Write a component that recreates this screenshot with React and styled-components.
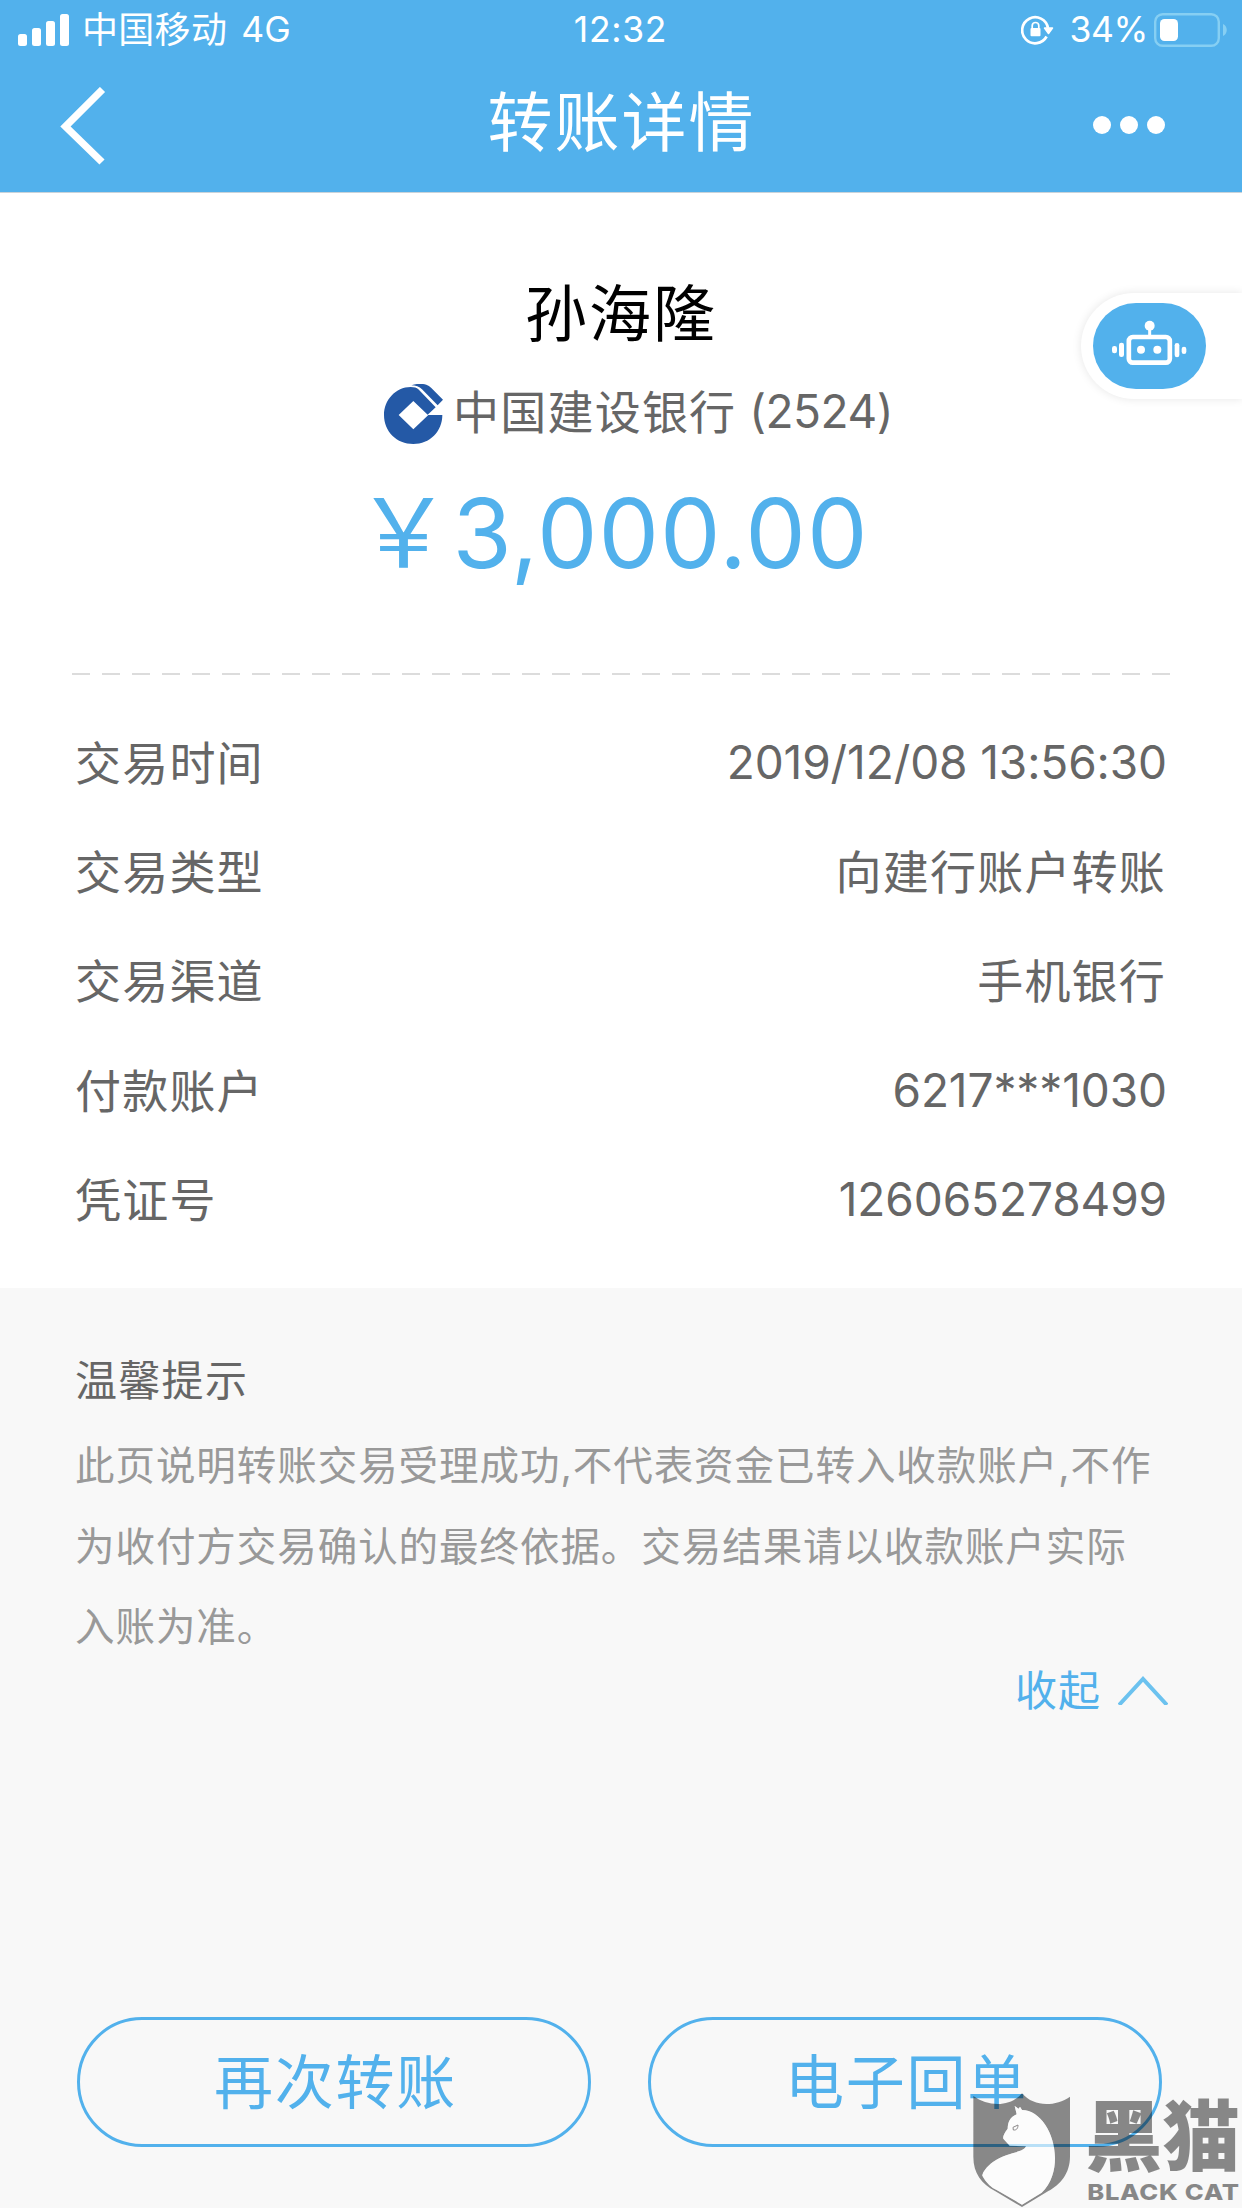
import React, { useState } from "react";
import styled, { createGlobalStyle } from "styled-components";

const BLUE = "#52b1ec";

const GlobalStyle = createGlobalStyle`
  * {
    box-sizing: border-box;
  }
  body {
    margin: 0;
    background-color: #f8f8f8;
    font-family: Inter, "Noto Sans CJK SC", sans-serif;
  }
`;
const Page = styled.div`
  position: relative;
  display: flex;
  flex-direction: column;
  width: 1242px;
  height: 2208px;
  overflow: hidden;
  background-color: #f8f8f8;
`;
const Header = styled.header`
  height: 193px;
  background-color: ${BLUE};
  border-bottom: solid 1px #c9d3da;
  color: white;
`;
const StatusBar = styled.div`
  display: grid;
  grid-template-columns: 1fr auto 1fr;
  align-items: center;
  height: 60px;
  padding: 0 15px 0 18px;
  font-size: 35.5px;
  line-height: 60px;
`;
const StatusGroup = styled.div`
  display: flex;
  flex-direction: row;
  align-items: center;
  justify-content: ${(props) => (props.$end ? "flex-end" : "flex-start")};

  > svg {
    flex: none;
  }
`;
const Carrier = styled.span`
  margin: 0 14px 0 13px;
  font-size: 36px;
  letter-spacing: 0.3px;
`;
const Clock = styled.span`
  margin-right: 4px;
  letter-spacing: 0.7px;
`;
const Percent = styled.span`
  margin: 0 6px 0 15px;
  letter-spacing: -0.4px;
`;
const NavBar = styled.div`
  display: grid;
  grid-template-columns: 1fr auto 1fr;
  align-items: center;
  height: 132px;
  padding: 0 77px 0 60px;
`;
const Title = styled.h1`
  margin: 0;
  padding: 0 0 7px 18px;
  font-size: 65px;
  font-weight: 400;
  line-height: 90px;
  letter-spacing: 2px;
`;
const IconButton = styled.button`
  display: flex;
  justify-self: ${(props) => (props.$end ? "end" : "start")};
  padding: 0 0 ${(props) => (props.$end ? "2px" : "0")};
  border: none;
  background: none;
  cursor: pointer;
`;
const Receipt = styled.main`
  height: 1095px;
  padding: 77px 72px 0;
  background-color: white;
`;
const Summary = styled.section`
  display: flex;
  flex-direction: column;
  align-items: center;
`;
const Payee = styled.div`
  height: 90px;
  font-size: 62px;
  line-height: 90px;
  letter-spacing: 2px;
  color: black;
`;
const Bank = styled.div`
  display: flex;
  flex-direction: row;
  align-items: center;
  height: 70px;
  margin: 18px 0 0 35px;
  font-size: 46px;
  line-height: 68px;
  letter-spacing: 1.2px;
  color: #666;

  > svg {
    margin: 2px 10px 0 0;
  }
`;
const BankName = styled.span`
  padding-bottom: 2px;
`;
const CardTail = styled.span`
  margin-left: 13px;
  padding-bottom: 4px;
  letter-spacing: -0.5px;
`;
const Amount = styled.div`
  display: flex;
  flex-direction: row;
  height: 120px;
  margin: 25px 0 0 -18px;
  font-size: 96px;
  line-height: 120px;
  letter-spacing: 1px;
  color: ${BLUE};
`;
const Currency = styled.span`
  height: 120px;
  margin-top: -7px;
  font-family: "Noto Sans CJK SC", sans-serif;
`;
const Divider = styled.div`
  height: 2px;
  margin-top: 80px;
  background: repeating-linear-gradient(
    to right,
    #dcdcdc 0 18px,
    transparent 18px 30px
  );
`;
const Details = styled.dl`
  margin: 32px 0 0;
  padding: 0 3px;
`;
const Row = styled.div`
  display: flex;
  flex-direction: row;
  justify-content: space-between;
  align-items: center;
  height: 109.4px;
  font-size: 46px;
  color: #666;
`;
const Label = styled.dt`
  margin: 0;
  padding-bottom: 4px;
  letter-spacing: 1.2px;
`;
const Value = styled.dd`
  margin: 0;
  padding-right: ${(props) => (props.$numeric ? "0" : "1px")};
  padding-bottom: ${(props) => (props.$numeric ? "0" : "4px")};
  letter-spacing: ${(props) => (props.$numeric ? "-0.1px" : "1.2px")};
`;
const Tips = styled.section`
  flex: 1;
  padding: 60px 74px 0 75px;
`;
const TipsTitle = styled.h2`
  margin: 0;
  font-size: 42px;
  font-weight: 400;
  line-height: 66px;
  letter-spacing: 1.3px;
  color: #666;
`;
const TipsText = styled.p`
  margin: 12px 0 0;
  font-size: 39.5px;
  line-height: 80.6px;
  letter-spacing: 0.95px;
  white-space: pre-line;
  color: #999;
`;
const Toggle = styled.button`
  display: flex;
  flex-direction: row;
  align-items: center;
  gap: 17px;
  height: 60px;
  margin: -10px 0 0 auto;
  padding: 0;
  border: none;
  background: none;
  font: inherit;
  font-size: 42px;
  letter-spacing: 1px;
  color: ${BLUE};
  cursor: pointer;

  > svg {
    margin-top: 6px;
  }
`;
const Actions = styled.footer`
  display: flex;
  flex-direction: row;
  justify-content: space-between;
  padding: 0 80px 61px 77px;
`;
const ActionButton = styled.button`
  width: 514px;
  height: 130px;
  padding: 0 0 8px 3px;
  border: solid 3px ${BLUE};
  border-radius: 65px;
  background: none;
  font: inherit;
  font-size: 59px;
  letter-spacing: 1.7px;
  color: ${BLUE};
  cursor: pointer;
`;
const Assistant = styled.div`
  position: absolute;
  top: 293px;
  right: 0;
  display: flex;
  align-items: center;
  width: 161px;
  height: 106px;
  padding-left: 12px;
  border-radius: 53px 0 0 53px;
  background-color: white;
  box-shadow: 0 0 10px rgba(0, 0, 0, 0.1);
`;
const AssistantFace = styled.div`
  display: flex;
  width: 113px;
  height: 86px;
  border-radius: 43px;
  background-color: ${BLUE};
`;
const Watermark = styled.div`
  position: absolute;
  right: 0;
  bottom: 0;
  display: flex;
  flex-direction: row;
  align-items: flex-end;
  gap: 14px;
  pointer-events: none;
`;
const WatermarkText = styled.div`
  display: flex;
  flex-direction: column;
  width: 157px;
  height: 118px;
  white-space: nowrap;
  color: #000;
  opacity: 0.45;
`;
const WatermarkName = styled.span`
  height: 84px;
  font-family: "Noto Sans CJK SC", sans-serif;
  font-size: 77.5px;
  font-weight: 900;
  line-height: 82px;
`;
const WatermarkLatin = styled.span`
  height: 34px;
  padding: 3px 0 0 2px;
  font-size: 22px;
  font-weight: 800;
  line-height: 30px;
  letter-spacing: 0.6px;
  transform: scaleX(1.16);
  transform-origin: left;
`;

const SignalIcon = () => (
  <svg width="51" height="32" viewBox="0 0 51 32" fill="white">
    <rect x="0" y="20" width="9" height="12" rx="2.5" />
    <rect x="14" y="14" width="9" height="18" rx="2.5" />
    <rect x="28" y="7" width="9" height="25" rx="2.5" />
    <rect x="42" y="0" width="9" height="32" rx="2.5" />
  </svg>
);

const RotationLockIcon = () => (
  <svg width="33" height="30" viewBox="0 0 33 30">
    <path
      d="M25.6 21.5A13 13 0 1 1 27 13"
      fill="none"
      stroke="white"
      strokeWidth="2.7"
    />
    <path
      d="M23.5 13H31.5L27.5 18.5Z"
      fill="white"
      stroke="white"
      strokeWidth="1.5"
      strokeLinejoin="round"
    />
    <rect x="9.5" y="13" width="10" height="8.3" rx="1" fill="white" />
    <path
      d="M11.2 13.5V10.8a3.3 3.3 0 0 1 6.6 0V13.5"
      fill="none"
      stroke="white"
      strokeWidth="1.7"
    />
  </svg>
);

const BatteryIcon = () => (
  <svg width="73" height="34" viewBox="0 0 73 34">
    <rect
      x="1.2"
      y="1.2"
      width="63.6"
      height="31.6"
      rx="7.5"
      fill="none"
      stroke="#86cff3"
      strokeWidth="2.4"
    />
    <rect x="6" y="6" width="18" height="22" rx="4.5" fill="white" />
    <path d="M69 11c5 2 5 10 0 12z" fill="#86cff3" />
  </svg>
);

const BackIcon = () => (
  <svg width="46" height="78" viewBox="0 0 46 78">
    <path
      d="M42.5 2.5L5.5 39.5L42 75"
      fill="none"
      stroke="white"
      strokeWidth="7.3"
    />
  </svg>
);

const MoreIcon = () => (
  <svg width="72" height="18" viewBox="0 0 72 18" fill="white">
    <circle cx="9" cy="9" r="9" />
    <circle cx="36" cy="9" r="9" />
    <circle cx="63" cy="9" r="9" />
  </svg>
);

const BankLogo = () => (
  <svg width="59" height="60" viewBox="45 42 177 180" fill="#2459a6">
    <path d="M125 51C80 51 45 90 45 135C45 185 83 222 133 222C182 222 220 185 220 135H178L133 178L89 135L133 93L176 134L200 112L148 58Q141 51 125 51Z" />
    <path d="M127 46Q150 38 172 44Q180 47 187 54L222 89L206 106L159 58Q147 46 127 46Z" />
  </svg>
);

const RobotIcon = () => (
  <svg width="113" height="86" viewBox="99 69 339 258">
    <circle cx="269" cy="137" r="15" fill="white" />
    <path d="M269 140V168" stroke="white" strokeWidth="9" />
    <rect
      x="206.5"
      y="171"
      width="123"
      height="77"
      rx="12"
      fill="none"
      stroke="white"
      strokeWidth="14"
    />
    <circle cx="243" cy="209" r="12" fill="white" />
    <circle cx="292" cy="209" r="12" fill="white" />
    <rect x="177" y="188" width="15" height="43" rx="7" fill="white" />
    <rect x="344" y="189" width="14" height="43" rx="7" fill="white" />
    <rect x="156" y="198" width="15" height="22" rx="7" fill="white" />
    <rect x="365" y="200" width="14" height="22" rx="7" fill="white" />
  </svg>
);

const ChevronIcon = ({ up }) => (
  <svg width="50" height="29" viewBox="0 0 50 29">
    <path
      d={up ? "M1 29L25 3L49 29" : "M1 0L25 26L49 0"}
      fill="none"
      stroke="#6cc2ef"
      strokeWidth="4"
    />
  </svg>
);

const CatShield = () => (
  <svg width="98" height="115" viewBox="99 99 294 345">
    <path
      fillRule="evenodd"
      d="M100 108C145 140 210 142 246 100C282 142 345 140 390 110V290C390 340 360 375 325 393L246 441L165 393C125 372 100 340 100 290ZM224 138L230 163C210 172 204 185 203 206C192 220 188 230 190 236L209 257L258 259C250 280 200 275 160 305C140 320 128 335 127 347C140 370 155 383 170 390L246 434L305 398C335 370 345 330 345 295C345 220 300 150 246 150L240 140L236 146Z"
      fill="#000"
      fillOpacity="0.45"
    />
    <path
      d="M224 138L230 163C210 172 204 185 203 206C192 220 188 230 190 236L209 257L258 259C250 280 200 275 160 305C140 320 128 335 127 347C140 370 155 383 170 390L246 434L305 398C335 370 345 330 345 295C345 220 300 150 246 150L240 140L236 146Z"
      fill="#fff"
      fillOpacity="0.6"
    />
    <path
      d="M219 202L234 195C234 206 229 211 220 210Z"
      fill="none"
      stroke="#8b8889"
      strokeWidth="3"
    />
  </svg>
);

const DETAILS = [
  { label: "交易时间", value: "2019/12/08 13:56:30", numeric: true },
  { label: "交易类型", value: "向建行账户转账" },
  { label: "交易渠道", value: "手机银行" },
  { label: "付款账户", value: "6217***1030", numeric: true },
  { label: "凭证号", value: "126065278499", numeric: true },
];

const TIPS = `此页说明转账交易受理成功,不代表资金已转入收款账户,不作
为收付方交易确认的最终依据。交易结果请以收款账户实际
入账为准。`;

const App = () => {
  const [isOpen, setOpen] = useState(true);

  return (
    <Page>
      <GlobalStyle />
      <Header>
        <StatusBar>
          <StatusGroup>
            <SignalIcon />
            <Carrier>中国移动</Carrier>
            <span>4G</span>
          </StatusGroup>
          <Clock>12:32</Clock>
          <StatusGroup $end>
            <RotationLockIcon />
            <Percent>34%</Percent>
            <BatteryIcon />
          </StatusGroup>
        </StatusBar>
        <NavBar>
          <IconButton aria-label="返回">
            <BackIcon />
          </IconButton>
          <Title>转账详情</Title>
          <IconButton $end aria-label="更多">
            <MoreIcon />
          </IconButton>
        </NavBar>
      </Header>
      <Receipt>
        <Summary>
          <Payee>孙海隆</Payee>
          <Bank>
            <BankLogo />
            <BankName>中国建设银行</BankName>
            <CardTail>(2524)</CardTail>
          </Bank>
          <Amount>
            <Currency>{"\uffe5"}</Currency>
            3,000.00
          </Amount>
        </Summary>
        <Divider />
        <Details>
          {DETAILS.map(({ label, value, numeric }) => (
            <Row key={label}>
              <Label>{label}</Label>
              <Value $numeric={numeric}>{value}</Value>
            </Row>
          ))}
        </Details>
      </Receipt>
      <Tips>
        <TipsTitle>温馨提示</TipsTitle>
        {isOpen && <TipsText>{TIPS}</TipsText>}
        <Toggle onClick={() => setOpen(!isOpen)}>
          {isOpen ? "收起" : "展开"}
          <ChevronIcon up={isOpen} />
        </Toggle>
      </Tips>
      <Actions>
        <ActionButton>再次转账</ActionButton>
        <ActionButton>电子回单</ActionButton>
      </Actions>
      <Assistant>
        <AssistantFace>
          <RobotIcon />
        </AssistantFace>
      </Assistant>
      <Watermark>
        <CatShield />
        <WatermarkText>
          <WatermarkName>黑猫</WatermarkName>
          <WatermarkLatin>BLACK CAT</WatermarkLatin>
        </WatermarkText>
      </Watermark>
    </Page>
  );
};

export default App;
